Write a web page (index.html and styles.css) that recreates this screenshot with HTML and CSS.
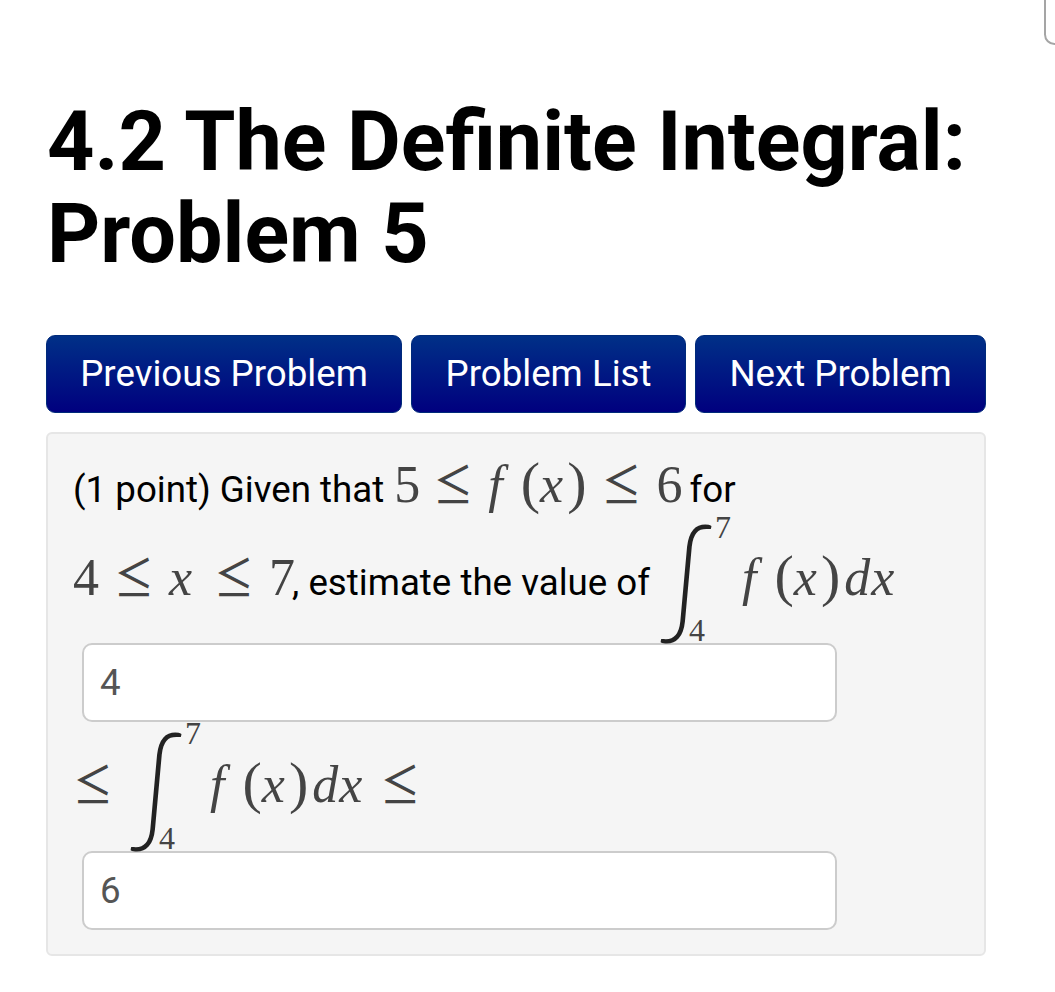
FILE: index.html
```html
<!DOCTYPE html>
<html lang="en">
<head>
    <meta charset="UTF-8">
    <meta name="viewport" content="width=device-width, initial-scale=1.0">
    <title>4.2 The Definite Integral: Problem 5</title>
    <link rel="stylesheet" href="styles.css">
</head>
<body>

<div class="corner-tab"></div>

<h1 class="page-title">4.2 The Definite Integral:<br>Problem 5</h1>

<nav class="problem-nav">
    <a class="nav-btn nav-prev" href="#">Previous Problem</a>
    <a class="nav-btn nav-list" href="#">Problem List</a>
    <a class="nav-btn nav-next" href="#">Next Problem</a>
</nav>

<div class="problem-box">
    <div class="line line-first">
        <span>(1 point) Given that</span>
        <span class="math math-first"><span>5</span><span class="rel rel-fn">≤</span><i>f</i><span class="open">(</span><i>x</i><span class="close">)</span><span class="rel">≤</span><span>6</span></span>
        <span class="for-word">for</span>
    </div>
    <div class="line line-second">
        <span class="math"><span>4</span><span class="rel">≤</span><i class="var-x">x</i><span class="rel">≤</span><span>7</span></span>
        <span class="after-math">, estimate the value of</span>
        <span class="math integral"><span class="int-sign">∫</span><span class="limit limit-top">7</span><span class="limit limit-bottom">4</span><i>f</i><span class="open">(</span><i>x</i><span class="close">)</span><i class="diff">dx</i></span>
    </div>
    <input class="answer" type="text" value="4">
    <div class="line line-third">
        <span class="math"><span class="rel rel-lead">≤</span></span>
        <span class="math integral integral-mid"><span class="int-sign">∫</span><span class="limit limit-top">7</span><span class="limit limit-bottom">4</span><i>f</i><span class="open">(</span><i>x</i><span class="close">)</span><i class="diff">dx</i><span class="rel rel-last">≤</span></span>
    </div>
    <input class="answer" type="text" value="6">
</div>

</body>
</html>
```

FILE: styles.css
```css
* {
    box-sizing: border-box;
}

html, body {
    height: 100%;
}

body {
    margin: 0;
    padding: 96px 69px 0 46px;
    background: #fff;
    color: #000;
    font-family: Roboto, Arial, sans-serif;
    overflow: hidden;
    position: relative;
}

.corner-tab {
    position: absolute;
    top: -10px;
    right: -10px;
    width: 21px;
    height: 55px;
    border: 2px solid #a5a5a5;
    border-radius: 12px;
}

.page-title {
    margin: 0 0 55px 1px;
    font-size: 82.7px;
    line-height: 92px;
    font-weight: 700;
    white-space: nowrap;
}

.problem-nav {
    display: flex;
    gap: 9px;
    margin-bottom: 19px;
}

.nav-btn {
    display: block;
    height: 78px;
    line-height: 75px;
    border: 1px solid #002a7a;
    border-radius: 9px;
    background: linear-gradient(#003087, #00007f);
    color: #fff;
    font-size: 36.7px;
    text-align: center;
    text-decoration: none;
}

.nav-prev { width: 356px; }
.nav-list { width: 275px; }
.nav-next { width: 291px; }

.problem-box {
    width: 940px;
    height: 524px;
    padding: 0 25px;
    background: #f5f5f5;
    border: 2px solid #e6e6e6;
    border-radius: 6px;
    font-size: 36.7px;
}

.line {
    display: flex;
    align-items: baseline;
    white-space: nowrap;
}

.line-first {
    height: 72px;
    padding-top: 34px;
}

.line-second {
    height: 137px;
    padding-top: 55px;
}

.line-third {
    height: 129px;
    padding-top: 46px;
}

/* formula parts */
.math {
    display: inline-block;
    position: relative;
    font-family: "Liberation Serif", "Times New Roman", serif;
    font-size: 52px;
    line-height: 30px;
    color: #444;
}

.math-first {
    margin-left: 10px;
}

.rel {
    display: inline-block;
    margin: 0 15px;
    font-family: "Noto Sans CJK JP", sans-serif;
    font-size: 40px;
    transform: scaleY(1.25);
    transform-origin: 50% 85%;
}

.rel-fn {
    margin-left: 13px;
}

.rel-lead {
    margin: 0;
}

.rel-last {
    margin-left: 17px;
    margin-right: 0;
}

.open {
    margin-left: 18px;
    font-size: 58px;
}

.close {
    margin-left: 4px;
    font-size: 58px;
}

.var-x {
    margin-right: 7px;
}

.diff {
    margin-left: 4px;
    letter-spacing: 1px;
}

.for-word {
    margin-left: 7px;
}

.after-math {
    margin-left: -3px;
}

.integral {
    padding-left: 92px;
}

.integral-mid {
    padding-left: 97px;
}

.int-sign {
    position: absolute;
    left: 10px;
    top: -45px;
    font-family: Lato, sans-serif;
    font-size: 120px;
    font-weight: 300;
    line-height: 120px;
    color: #222;
    transform: scaleX(0.85);
    transform-origin: left center;
}

.limit {
    position: absolute;
    font-size: 32px;
    line-height: 32px;
}

.limit-top {
    left: 65px;
    top: -50px;
}

.limit-bottom {
    left: 39px;
    top: 53px;
}

.integral-mid .int-sign { left: 17px; top: -44px; }
.integral-mid .limit-top { left: 72px; top: -51px; }
.integral-mid .limit-bottom { left: 46px; top: 54px; }

.answer {
    display: block;
    width: 755px;
    height: 79px;
    margin-left: 9px;
    padding: 0 16px;
    background: #fff;
    border: 2px solid #ccc;
    border-radius: 10px;
    color: #555;
    font-family: Roboto, Arial, sans-serif;
    font-size: 36.7px;
}
```
